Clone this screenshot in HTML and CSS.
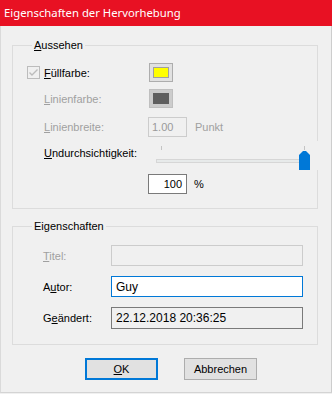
FILE: index.html
```html
<!DOCTYPE html>
<html lang="de">
<head>
<meta charset="utf-8">
<title>Eigenschaften der Hervorhebung</title>
<link rel="stylesheet" href="styles.css">
</head>
<body>
<div class="window">
  <div class="titlebar">Eigenschaften der Hervorhebung</div>
  <div class="frame">
    <fieldset class="group g1">
      <legend><u>A</u>ussehen</legend>
      <div class="row r1">
        <div class="lab">
          <span class="check"><svg width="13" height="13" viewBox="0 0 13 13"><rect x="0.5" y="0.5" width="12" height="12" fill="#f0f0f0" stroke="#bcbcbc"/><path d="M2.5 6.5 L5 9 L10.5 3.5" fill="none" stroke="#bcbcbc" stroke-width="1.4"/></svg></span>
          <span><u>F</u>üllfarbe:</span>
        </div>
        <div class="colorbtn"><span class="swatch yellow"></span></div>
      </div>
      <div class="row r2 dis">
        <div class="lab ind"><u>L</u>inienfarbe:</div>
        <div class="colorbtn off"><span class="swatch dark"></span></div>
      </div>
      <div class="row r3 dis">
        <div class="lab ind"><u>L</u>inienbreite:</div>
        <div class="tb tb-off w39">1.00</div>
        <span class="unit">Punkt</span>
      </div>
      <div class="row r4">
        <div class="lab ind lab-top"><u>U</u>ndurchsichtigkeit:</div>
        <div class="slider">
          <svg width="172" height="29" viewBox="0 0 172 29">
            <rect x="13" y="5" width="1" height="4" fill="#c4c4c4"/>
            <rect x="156" y="5" width="1" height="4" fill="#c4c4c4"/>
            <rect x="8.5" y="18.5" width="153" height="3" fill="#e7eaea" stroke="#d6d6d6"/>
            <path d="M151 14 L155 10 L158 10 L162 14 V29 H151 Z" fill="#0078d7"/>
          </svg>
        </div>
      </div>
      <div class="row r5">
        <div class="lab"></div>
        <div class="tb tb-white w39 right">100</div>
        <span class="unit black">%</span>
      </div>
    </fieldset>

    <fieldset class="group g2">
      <legend>Eigenschaften</legend>
      <div class="row q1 dis">
        <div class="lab2"><u>T</u>itel:</div>
        <div class="tb tb-off wide"></div>
      </div>
      <div class="row q2">
        <div class="lab2">A<u>u</u>tor:</div>
        <div class="tb tb-focus wide">Guy</div>
      </div>
      <div class="row q3">
        <div class="lab2">G<u>e</u>ändert:</div>
        <div class="tb tb-ro wide">22.12.2018 20:36:25</div>
      </div>
    </fieldset>

    <div class="buttons">
      <button class="btn default"><u>O</u>K</button>
      <button class="btn">Abbrechen</button>
    </div>
  </div>
</div>
</body>
</html>
```
FILE: styles.css
```css
html, body {
  margin: 0;
  padding: 0;
  background: #f0f0f0;
}
body {
  font-family: "Liberation Sans", Arial, sans-serif;
  font-size: 11px;
  color: #000;
}
u {
  text-decoration: underline;
  text-underline-offset: 1px;
}
.window {
  width: 332px;
  height: 394px;
  display: flex;
  flex-direction: column;
}
.titlebar {
  height: 26px;
  flex: none;
  background: #e81123;
  color: #fff;
  font-family: "Noto Sans", "Open Sans", sans-serif;
  font-size: 11.3px;
  line-height: 26px;
  padding-left: 4px;
  white-space: nowrap;
}
.frame {
  flex: 1;
  box-sizing: border-box;
  border-left: 1px solid #dadada;
  border-right: 1px solid #cdcdcd;
  border-bottom: 1px solid #d4d4d4;
  margin-bottom: 1px;
  padding: 13px 0 0 11px;
}
.group {
  margin: 0;
  padding: 0 0 0 14px;
  border: 1px solid #dcdcdc;
  width: 306px;
  box-sizing: border-box;
  min-width: 0;
}
.group legend {
  margin-left: 5px;
  padding: 0 2px;
  line-height: 13px;
  height: 13px;
}
.g1 { padding-bottom: 14px; }
.g2 { margin-top: 11px; padding-bottom: 15px; }

.row {
  display: flex;
  align-items: center;
}
.r1 { margin-top: 11px; height: 19px; }
.r2 { margin-top: 7px; height: 19px; }
.r3 { margin-top: 9px; height: 20px; }
.r4 { margin-top: 4px; height: 29px; align-items: flex-start; }
.r5 { margin-top: 4px; height: 20px; }

.dis { color: #a0a0a0; }
.lab {
  width: 121px;
  flex: none;
  display: flex;
  align-items: center;
}
.lab.ind { padding-left: 17px; box-sizing: border-box; }
.lab-top { margin-top: 6px; }
.check {
  width: 13px;
  height: 13px;
  margin-right: 4px;
  display: block;
}
.check svg { display: block; }

.colorbtn {
  width: 24px;
  height: 19px;
  box-sizing: border-box;
  margin-left: 1px;
  border: 1px solid #adadad;
  background: #e1e1e1;
  display: flex;
  align-items: center;
  justify-content: center;
}
.colorbtn.off {
  background: #cccccc;
  border-color: #bfbfbf;
}
.swatch {
  width: 16px;
  height: 11px;
  box-sizing: border-box;
  display: block;
}
.swatch.yellow {
  background: #ffff00;
  border: 1px solid #a0a0a0;
}
.swatch.dark {
  background: #5f5f5f;
}

.tb {
  box-sizing: border-box;
  height: 100%;
  border: 1px solid #7a7a7a;
  padding: 0 3px;
  display: flex;
  align-items: center;
  white-space: nowrap;
}
.w39 { width: 39px; }
.right { justify-content: flex-end; padding-right: 4px; }
.tb-off {
  border-color: #cccccc;
  background: #f0f0f0;
  color: #9a9a9a;
}
.tb-white { background: #fff; }
.tb-focus {
  background: #fff;
  border-color: #0078d7;
}
.tb-ro {
  background: #f0f0f0;
  border-color: #7a7a7a;
}
.unit { margin-left: 8px; }
.unit.black { margin-left: 7px; color: #000; }

.slider {
  flex: none;
  width: 172px;
  height: 29px;
  margin-right: -4px;
  background: #f0f0f0;
}
.slider svg { display: block; }

.lab2 {
  width: 84px;
  flex: none;
  box-sizing: border-box;
  padding-left: 16px;
}
.wide { width: 192px; }
.q1 { margin-top: 12px; height: 21px; }
.q2 { margin-top: 10px; height: 21px; }
.q3 { margin-top: 10px; height: 22px; }
.g2 .tb { padding-left: 4px; font-size: 12px; }

.buttons {
  display: flex;
  gap: 26px;
  margin-top: 13px;
  padding-left: 73px;
}
.btn {
  width: 73px;
  height: 22px;
  box-sizing: border-box;
  border: 1px solid #adadad;
  background: #e1e1e1;
  font-family: "Liberation Sans", Arial, sans-serif;
  font-size: 11px;
  color: #000;
  padding: 0;
  margin: 0;
}
.btn.default {
  border: 2px solid #0078d7;
}
```
